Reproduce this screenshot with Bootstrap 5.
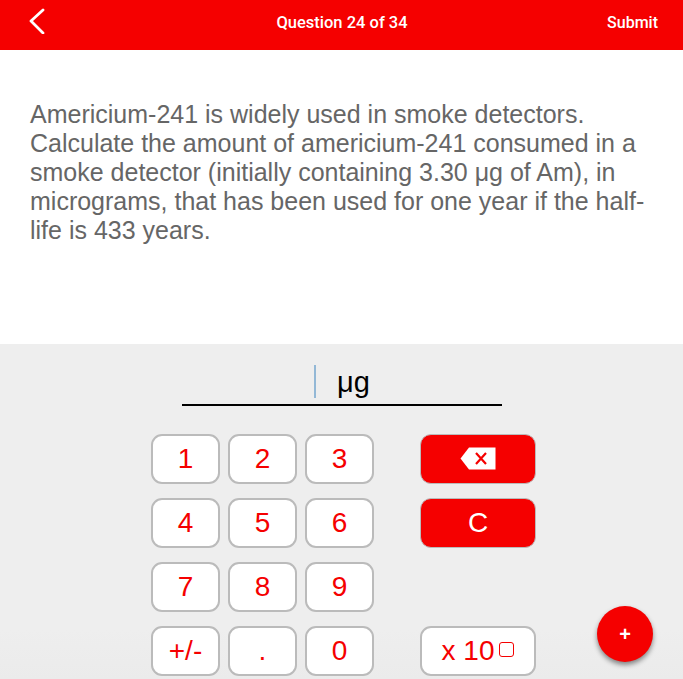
<!DOCTYPE html>
<html lang="en">
<head>
<meta charset="utf-8">
<title>Question 24 of 34</title>
<link href="https://cdn.jsdelivr.net/npm/bootstrap@5.3.0/dist/css/bootstrap.min.css" rel="stylesheet">
<style>
html,body{height:100%;overflow:hidden}
body{font-family:"Liberation Sans",Arial,sans-serif;background:#fff}
.page-wrap{height:679px;width:683px;position:relative}
.top-bar{height:50px;background:#f50000;color:#fff;font-family:Roboto,"Liberation Sans",sans-serif;font-weight:500;font-size:16.5px;padding:0 25px 6px 29px}
.top-title{left:0;right:0;top:11px;padding-left:1px;pointer-events:none}
.back-btn{padding:0;background:none;border:0;line-height:0;margin-top:-2px}
.submit-btn{padding:0;background:none;border:0;color:#fff;font:inherit;font-size:16px;margin-top:1px}
.question-area{height:294px;padding:50px 30px 0;font-size:25px;line-height:29px;color:#666}
.question-area p{margin:0}
.answer-area{height:335px;background:linear-gradient(#eee 0,#eee 85%,#ebebeb 100%);padding-top:21px}
.answer-line{width:320px;height:41px;border-bottom:2px solid #000;margin-left:182px}
.caret-mark{width:2px;height:33px;background:#93b8d6;margin-left:132px;margin-right:21px}
.unit-text{font-size:29px;line-height:35px;color:#000}
.keypad{padding:28px 0 0 151px;gap:46px}
.key-grid{display:grid;grid-template-columns:repeat(3,69px);grid-auto-rows:50px;gap:14px 8px}
.side-keys{display:grid;grid-template-columns:116px;grid-auto-rows:50px;gap:14px 0}
.calc-key{background:#fff;border:2px solid #bbb;border-radius:11px;color:#f50000;font-size:28px;padding:0 0 1px;line-height:1;display:flex;align-items:center;justify-content:center}
.calc-key.key-red{background:#f50000;color:#fff;border-width:1px}
.exp-box{width:15px;height:15px;border:1.5px solid #f50000;border-radius:3px;margin:0 0 3px 5px}
.fab-add{position:absolute;left:597px;top:606px;width:56px;height:56px;border-radius:50%;border:0;background:#f50000;color:#fff;font-size:20px;font-weight:700;line-height:1;padding:0 0 1px;box-shadow:0 3px 5px rgba(0,0,0,.45)}
</style>
</head>
<body>
<div class="page-wrap">
  <div class="top-bar d-flex align-items-center justify-content-between position-relative">
    <button class="back-btn" aria-label="Back"><svg width="16" height="26" viewBox="0 0 16 26"><path d="M14 2 L2 13 L14 25" fill="none" stroke="#fff" stroke-width="2.8" stroke-linecap="round" stroke-linejoin="round"/></svg></button>
    <div class="top-title position-absolute text-center">Question 24 of 34</div>
    <button class="submit-btn">Submit</button>
  </div>
  <div class="question-area">
    <p>Americium-241 is widely used in smoke detectors.<br>Calculate the amount of americium-241 consumed in a<br>smoke detector (initially containing 3.30 μg of Am), in<br>micrograms, that has been used for one year if the half-<br>life is 433 years.</p>
  </div>
  <div class="answer-area">
    <div class="answer-line d-flex">
      <span class="caret-mark"></span><span class="unit-text">μg</span>
    </div>
    <div class="keypad d-flex">
      <div class="key-grid">
        <button class="calc-key">1</button><button class="calc-key">2</button><button class="calc-key">3</button>
        <button class="calc-key">4</button><button class="calc-key">5</button><button class="calc-key">6</button>
        <button class="calc-key">7</button><button class="calc-key">8</button><button class="calc-key">9</button>
        <button class="calc-key">+/-</button><button class="calc-key">.</button><button class="calc-key">0</button>
      </div>
      <div class="side-keys">
        <button class="calc-key key-red" aria-label="Backspace"><svg width="36" height="23" viewBox="0 0 36 23"><path d="M9 0.5H35.5V22.5H9L0.5 11.5Z" fill="#fff"/><path d="M16 6L26 17M26 6L16 17" stroke="#f50000" stroke-width="2.2" fill="none"/></svg></button>
        <button class="calc-key key-red">C</button>
        <span></span>
        <button class="calc-key">x 10<span class="exp-box"></span></button>
      </div>
    </div>
  </div>
  <button class="fab-add">+</button>
</div>
<script src="https://cdn.jsdelivr.net/npm/bootstrap@5.3.0/dist/js/bootstrap.bundle.min.js"></script>
</body>
</html>
